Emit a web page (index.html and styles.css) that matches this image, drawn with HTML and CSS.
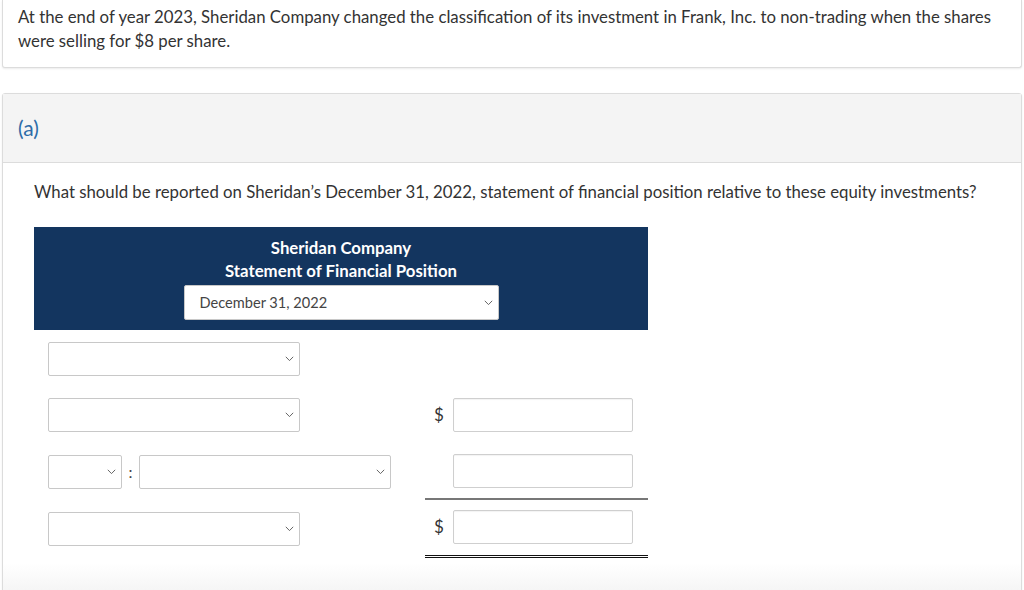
FILE: index.html
```html
<!DOCTYPE html>
<html lang="en">
<head>
<meta charset="utf-8">
<title>Sheridan Company</title>
<link rel="stylesheet" href="styles.css">
</head>
<body>
<div class="page">
  <div class="card intro">
    <p>At the end of year 2023, Sheridan Company changed the classification of its investment in Frank, Inc. to non-trading when the shares were selling for $8 per share.</p>
  </div>

  <div class="card part">
    <div class="part-head">(a)</div>
    <div class="part-body">
      <p class="question">What should be reported on Sheridan’s December 31, 2022, statement of financial position relative to these equity investments?</p>

      <div class="sheet">
        <div class="sheet-head">
          <div class="title">Sheridan Company</div>
          <div class="title">Statement of Financial Position</div>
          <div class="select head-select">
            <span>December 31, 2022</span>
            <svg class="chev" width="9" height="6" viewBox="0 0 9 6"><path d="M0.8 0.8 L4.5 4.6 L8.2 0.8" fill="none" stroke="#666" stroke-width="1"/></svg>
          </div>
        </div>

        <div class="row row-1">
          <div class="left">
            <div class="select wide"><svg class="chev" width="9" height="6" viewBox="0 0 9 6"><path d="M0.8 0.8 L4.5 4.6 L8.2 0.8" fill="none" stroke="#666" stroke-width="1"/></svg></div>
          </div>
          <div class="right"></div>
        </div>

        <div class="row row-2">
          <div class="left">
            <div class="select wide"><svg class="chev" width="9" height="6" viewBox="0 0 9 6"><path d="M0.8 0.8 L4.5 4.6 L8.2 0.8" fill="none" stroke="#666" stroke-width="1"/></svg></div>
          </div>
          <div class="right"><span class="dollar">$</span><div class="input"></div></div>
        </div>

        <div class="row row-3">
          <div class="left">
            <div class="select small"><svg class="chev" width="9" height="6" viewBox="0 0 9 6"><path d="M0.8 0.8 L4.5 4.6 L8.2 0.8" fill="none" stroke="#666" stroke-width="1"/></svg></div>
            <span class="colon">:</span>
            <div class="select wide"><svg class="chev" width="9" height="6" viewBox="0 0 9 6"><path d="M0.8 0.8 L4.5 4.6 L8.2 0.8" fill="none" stroke="#666" stroke-width="1"/></svg></div>
          </div>
          <div class="right underline"><span class="dollar"></span><div class="input"></div></div>
        </div>

        <div class="row row-4">
          <div class="left">
            <div class="select wide"><svg class="chev" width="9" height="6" viewBox="0 0 9 6"><path d="M0.8 0.8 L4.5 4.6 L8.2 0.8" fill="none" stroke="#666" stroke-width="1"/></svg></div>
          </div>
          <div class="right double"><span class="dollar">$</span><div class="input"></div></div>
        </div>
      </div>
      <div class="part-foot"></div>
    </div>
  </div>
</div>
</body>
</html>
```

FILE: styles.css
```css
* { box-sizing: border-box; }
html, body { margin: 0; padding: 0; background: #fff; }
body {
  font-family: Lato, "Open Sans", "Liberation Sans", sans-serif;
  color: #333;
  font-size: 16.8px;
  line-height: 24px;
  overflow: hidden;
  height: 590px;
}
p { margin: 0; }
.page { padding: 0 2px; }

.card {
  border: 1px solid #dcdcdc;
  border-radius: 3px;
  background: #fff;
  box-shadow: 0 1px 2px rgba(0,0,0,0.08);
}
.intro {
  border-top: none;
  border-radius: 0 0 3px 3px;
  padding: 5px 16px 14px 15px;
}
.part { margin-top: 25px; }
.part-head {
  background: #f4f4f4;
  height: 69px;
  border-bottom: 1px solid #dcdcdc;
  padding: 20px 15px 0 15px;
  font-size: 21px;
  line-height: 28px;
  color: #2d6ca8;
}
.part-body {
  padding: 17px 0 0 31px;
}
.question { margin-bottom: 23px; }

.sheet { width: 614px; }
.sheet-head {
  background: #13355f;
  padding: 9px 0 10px 0;
  display: flex;
  flex-direction: column;
  align-items: center;
}
.title {
  color: #fff;
  font-weight: bold;
  font-size: 16.8px;
  line-height: 23px;
}
.select {
  height: 34px;
  border: 1px solid #c8c8c8;
  border-radius: 2px;
  background: #fff;
  display: flex;
  align-items: center;
  justify-content: flex-end;
  padding-right: 5px;
}
.head-select {
  width: 315px;
  height: 35px;
  margin-top: 3px;
  justify-content: space-between;
  padding-left: 15px;
  font-size: 14.6px;
  color: #444;
}
.chev { display: block; }

.row { display: flex; }
.left {
  width: 391px;
  padding-left: 14px;
  display: flex;
  align-items: center;
}
.right {
  width: 223px;
  padding-right: 15px;
  display: flex;
  align-items: center;
}
.row-1 > div { padding-top: 12px; padding-bottom: 10px; }
.row-2 > div { padding-top: 12px; padding-bottom: 10px; }
.row-3 > div { padding-top: 12px; padding-bottom: 10px; }
.row-4 > div { padding-top: 10px; padding-bottom: 11px; }
.wide { width: 252px; }
.small { width: 74px; }
.colon {
  width: 17px;
  text-align: center;
  font-size: 16px;
  color: #444;
}
.dollar {
  width: 28px;
  text-align: center;
  font-size: 17px;
  color: #333;
}
.input {
  width: 181px;
  height: 34px;
  border: 1px solid #cfcfcf;
  border-radius: 2px;
  box-shadow: inset 0 1px 1px rgba(0,0,0,0.05);
  background: #fff;
}
.underline { border-bottom: 2px solid #777; }
.double { border-bottom: 3px double #111; }

.part-foot {
  margin-left: -31px;
  height: 40px;
  margin-top: 5px;
  background: linear-gradient(#fff, #f1f1f1);
}
```
